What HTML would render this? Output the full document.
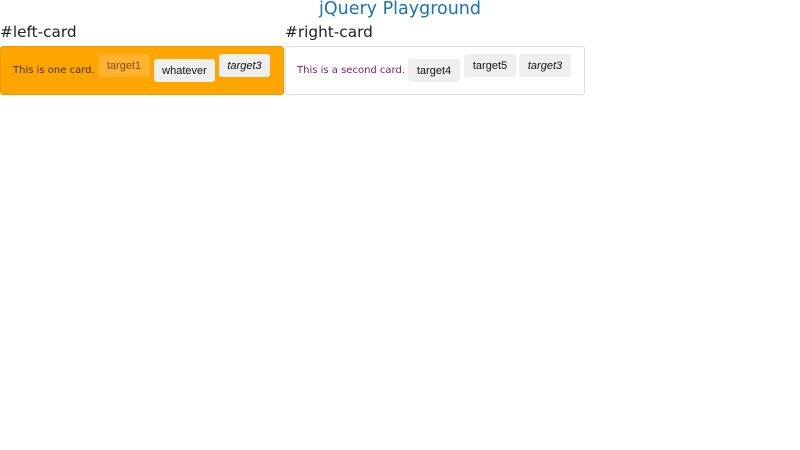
<!DOCTYPE html>
<html><head><meta charset="utf-8"><style>
body{margin:0;width:800px;height:450px;background:#fff;position:relative;font-family:"DejaVu Sans",sans-serif;overflow:hidden}
.a{position:absolute;white-space:nowrap}
.t{left:0;width:800px;text-align:center;top:-1px;font-size:17.5px;color:#1a73b8}
.h{font-size:15.3px;color:#222;top:23px}
.card{position:absolute;top:46px;height:49px;border-radius:3px;box-sizing:border-box}
.l{left:0;width:284px;background:#ffa500;border:1px solid #e89a00}
.r{left:285px;width:300px;background:#fff;border:1px solid #ddd}
.b{position:absolute;height:23px;text-align:center;border-radius:3px;background:#efefef;color:#111;font-family:"Liberation Sans",sans-serif;font-size:11px;line-height:24px}
.txt{font-size:10px;top:64px;line-height:13px}
</style></head><body>
<div class="a t">jQuery Playground</div>
<div class="a h" style="left:0">#left-card</div>
<div class="a h" style="left:285px">#right-card</div>
<div class="card l"></div>
<div class="card r"></div>
<div class="a txt" style="left:13px;color:#4a3000">This is one card.</div>
<div class="b" style="left:98px;top:54px;width:52px;background:#ffb22e;color:#8a4a20">target1</div>
<div class="b" style="left:154px;top:59px;width:61px">whatever</div>
<div class="b" style="left:219px;top:54px;width:51px;font-style:italic">target3</div>
<div class="a txt" style="left:297px;color:#7a1a7a">This is a second card.</div>
<div class="b" style="left:408px;top:59px;width:52px">target4</div>
<div class="b" style="left:464px;top:54px;width:52px">target5</div>
<div class="b" style="left:519px;top:54px;width:52px;font-style:italic">target3</div>
</body></html>
